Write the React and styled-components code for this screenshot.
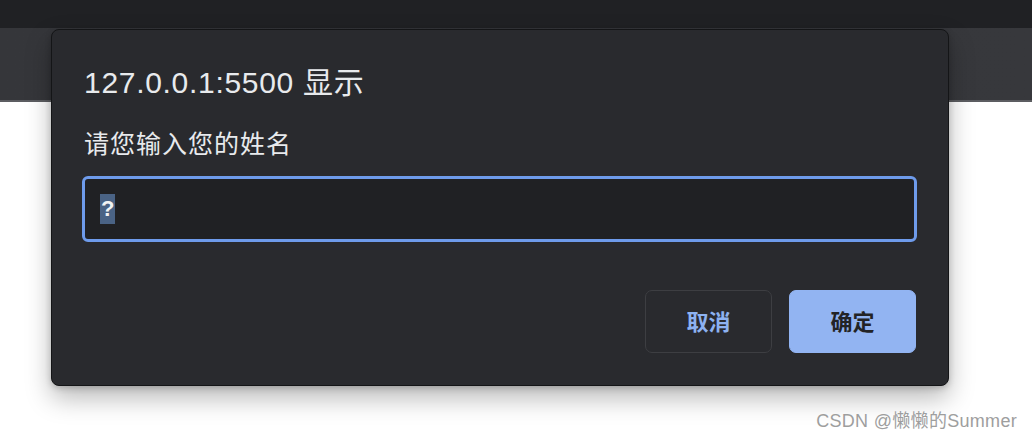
import React from "react";
import styled, { createGlobalStyle } from "styled-components";

const GlobalStyle = createGlobalStyle`
  html, body {
    margin: 0;
    padding: 0;
    background: #ffffff;
    font-family: "Liberation Sans", "Noto Sans CJK SC", sans-serif;
  }
`;

// browser chrome behind the dialog

export const Page = styled.div`
  position: relative;
  width: 1032px;
  height: 440px;
  overflow: hidden;
  background: #ffffff;
`;

export const TabStrip = styled.div`
  height: 28px;
  background: #202124;
`;

export const Toolbar = styled.div`
  height: 72px;
  background: linear-gradient(90deg, #35363a 0%, #37383c 100%);
  border-bottom: 2px solid #5c5d61;
`;

export const Watermark = styled.div`
  position: absolute;
  right: 15px;
  bottom: 8px;
  font-size: 18px;
  color: #9e9e9e;
  letter-spacing: 0.3px;
  text-shadow: 0 0 1px #ffffff;
`;

// prompt dialog

export const Dialog = styled.div`
  position: absolute;
  left: 51px;
  top: 29px;
  box-sizing: content-box;
  width: 835px;
  background: #292a2e;
  border: 1px solid #141517;
  border-radius: 8px;
  padding: 34px 31px 32px 30px;
  box-shadow: 0 12px 26px rgba(0, 0, 0, 0.28), 0 2px 6px rgba(0, 0, 0, 0.2);
  display: flex;
  flex-direction: column;
`;

export const Title = styled.div`
  font-size: 30px;
  line-height: 38px;
  letter-spacing: 0.7px;
  color: #e8eaed;
  padding-left: 2px;
  margin-bottom: 26px;
`;

export const Label = styled.div`
  font-size: 25px;
  line-height: 32px;
  letter-spacing: 1px;
  color: #e8eaed;
  padding-left: 2px;
  margin-bottom: 16px;
`;

export const Field = styled.div`
  height: 60px;
  background: #202124;
  border: 3px solid #6e9beb;
  border-radius: 6px;
  display: flex;
  align-items: center;
  padding-left: 15px;
`;

export const Selected = styled.span`
  display: inline-block;
  height: 30px;
  line-height: 30px;
  padding: 0 1px;
  background: #4a6385;
  color: #f1f3f4;
  font-size: 22px;
  font-weight: 700;
`;

export const Actions = styled.div`
  display: flex;
  justify-content: flex-end;
  gap: 17px;
  margin-top: 48px;
  padding-right: 1px;
`;

export const Button = styled.button`
  width: 127px;
  height: 63px;
  box-sizing: border-box;
  padding: 0 0 4px;
  border-radius: 7px;
  font-family: "Liberation Sans", "Noto Sans CJK SC", sans-serif;
  font-size: 22px;
  font-weight: 700;
  cursor: pointer;
  border: 1px solid ${({ $primary }) => ($primary ? "#92b4f2" : "#3d3e42")};
  background: ${({ $primary }) => ($primary ? "#92b4f2" : "#292a2e")};
  color: ${({ $primary }) => ($primary ? "#222326" : "#8db2f1")};
`;

export default function App() {
  return (
    <Page>
      <GlobalStyle />
      <TabStrip />
      <Toolbar />
      <Dialog>
        <Title>127.0.0.1:5500 显示</Title>
        <Label>请您输入您的姓名</Label>
        <Field>
          <Selected>?</Selected>
        </Field>
        <Actions>
          <Button>取消</Button>
          <Button $primary>确定</Button>
        </Actions>
      </Dialog>
      <Watermark>CSDN @懒懒的Summer</Watermark>
    </Page>
  );
}
